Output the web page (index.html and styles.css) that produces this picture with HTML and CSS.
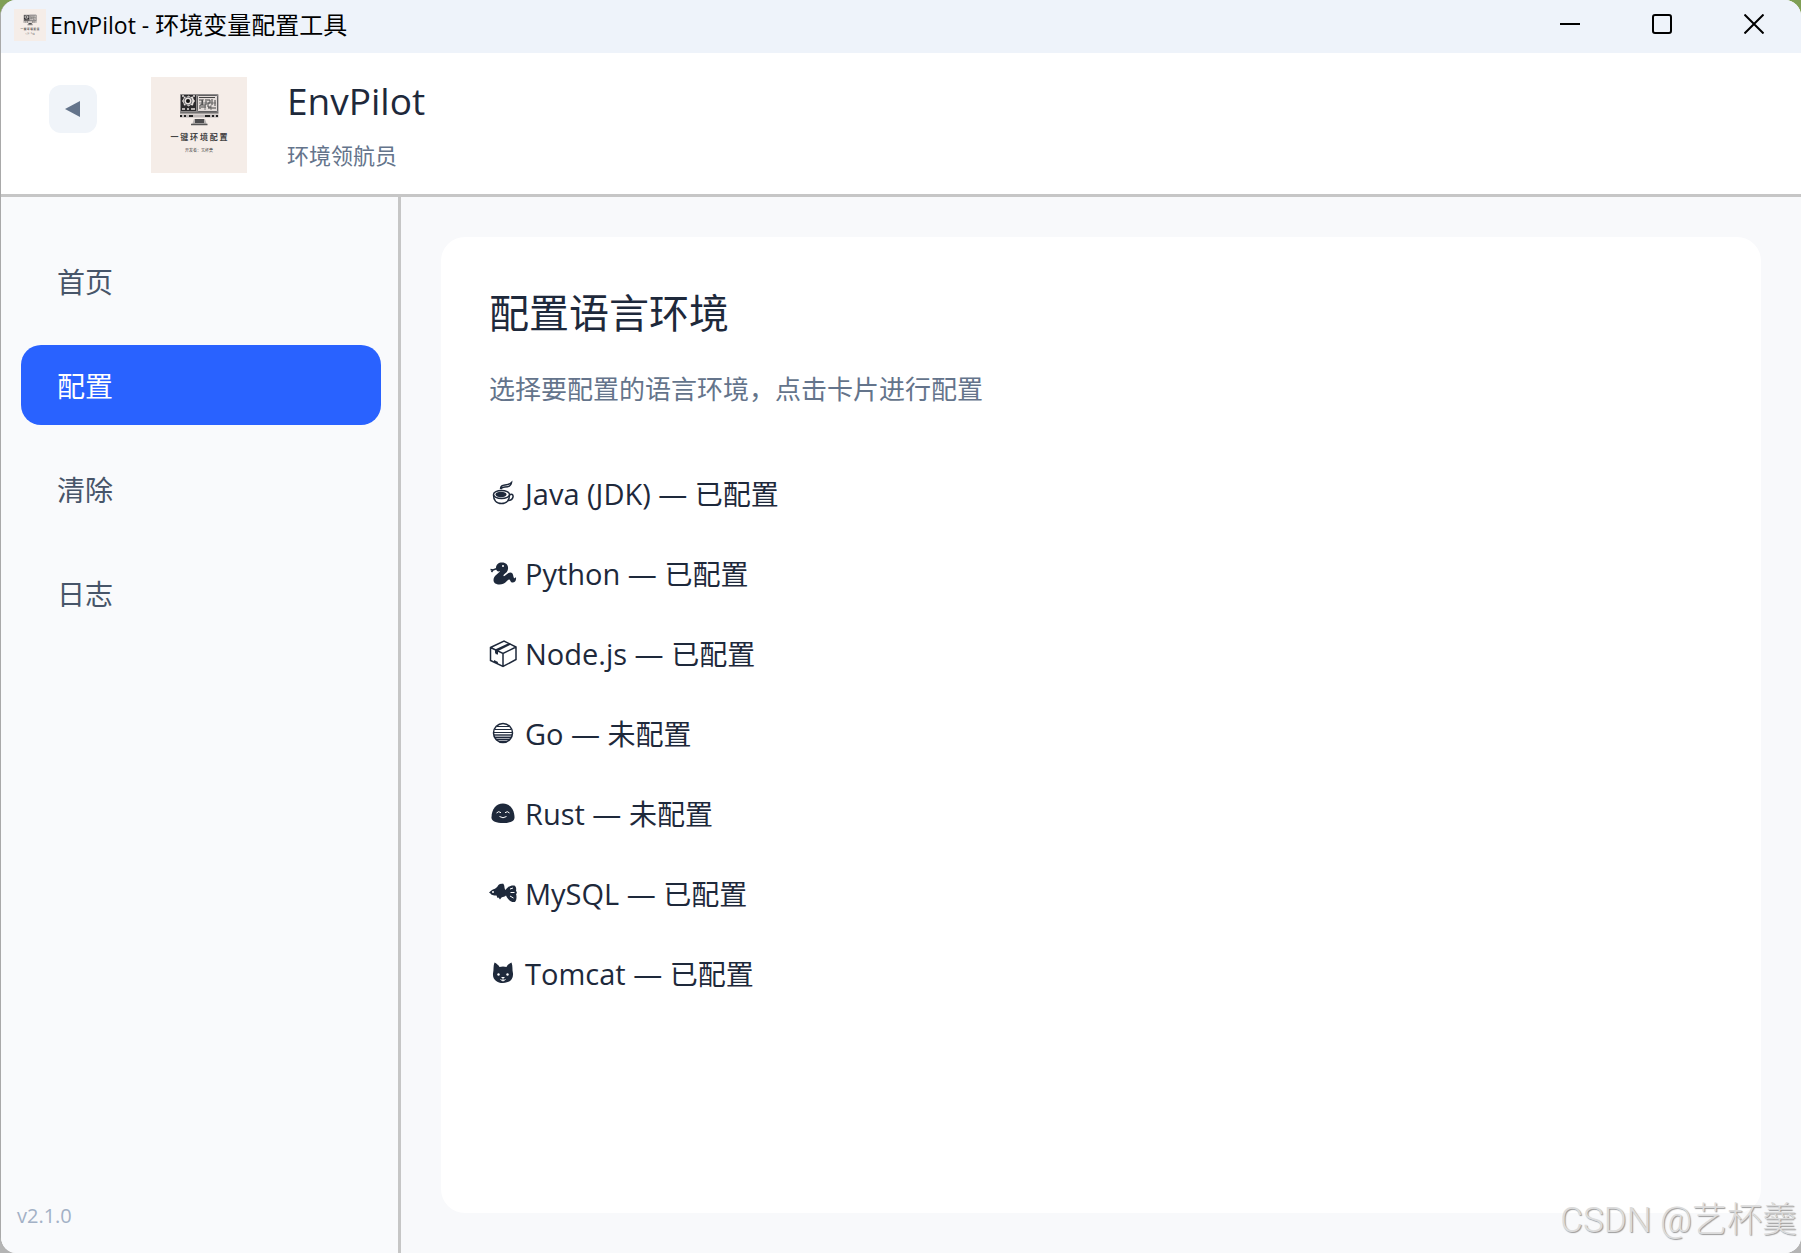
FILE: index.html
```html
<!DOCTYPE html>
<html lang="zh-CN">
<head>
    <meta charset="UTF-8">
    <title>EnvPilot - 环境变量配置工具</title>
    <link rel="stylesheet" href="styles.css">
</head>
<body>
<svg class="sprite" aria-hidden="true">
    <symbol id="logo" viewBox="0 0 96 96">
        <rect width="96" height="96" fill="#f5ede8"/>
        <!-- monitor -->
        <rect x="29" y="17" width="38.5" height="19" rx="1" fill="#8d8a8a"/>
        <rect x="30" y="18" width="15" height="16" fill="#2b2a2c"/>
        <path d="M37.5 18.5l2 1.5 2.5-.5.5 2.500 1.500 2-1.500 2-.5 2.500-2.500-.5-2 1.500-2-1.500-2.500.5-.5-2.500-1.500-2 1.500-2 .5-2.500 2.500.5z" fill="#e5dfdc"/>
        <circle cx="37" cy="24" r="4" fill="none" stroke="#77777a" stroke-width="1"/>
        <circle cx="37" cy="24" r="2" fill="#111"/>
        <path d="M31 32h3M36 32h2M40 32h4M31 19h2M42 19h2" stroke="#e5dfdc" stroke-width="1.500"/>
        <rect x="46.500" y="18.500" width="20" height="16" rx="1" fill="#e3dcd9" stroke="#4a4a4c" stroke-width=".8"/>
        <path d="M48 23h3v5h-2v4M52 22l-1 6h4v-6M56 23h3v3h-2v4h3M61 22v6M64 23v6M50 30h5M57 31h8M48 20.500h16" fill="none" stroke="#444" stroke-width="1"/>
        <path d="M48 26h17M54 28v5M60 28v5" stroke="#666" stroke-width=".8"/>
        <path d="M29 36h38.500" stroke="#555" stroke-width="1"/>
        <rect x="29" y="37.500" width="38.500" height="3" fill="#bdb7b6"/>
        <path d="M29 39h2M33 39h2M38 39h4M54 39h5M61 39h2M65 39h2" stroke="#222" stroke-width="2"/>
        <rect x="44" y="42" width="9" height="4" fill="#1e1e20"/>
        <path d="M43 42h11l2 6H41z" fill="#77777a" opacity=".5"/>
        <path d="M40 47.500h16.500" stroke="#555" stroke-width="1.300"/>
        <text class="logo-name" x="48" y="63" text-anchor="middle">一 键 环 境 配 置</text>
        <text class="logo-author" x="48" y="75" text-anchor="middle">开发者：艺杯羹</text>
    </symbol>
</svg>

<div class="window">
    <header class="titlebar">
        <svg class="titlebar-icon"><use href="#logo"/></svg>
        <p class="titlebar-text"><span class="titlebar-app">EnvPilot - </span>环境变量配置工具</p>
        <div class="controls">
            <button type="button" aria-label="最小化">
                <svg viewBox="0 0 20 20"><path d="M0 10h20"/></svg>
            </button>
            <button type="button" aria-label="最大化">
                <svg viewBox="0 0 20 20"><rect x="1" y="1" width="18" height="18" rx="2"/></svg>
            </button>
            <button type="button" aria-label="关闭">
                <svg viewBox="0 0 20 20"><path d="M.5.5l19 19M19.500.5l-19 19"/></svg>
            </button>
        </div>
    </header>

    <div class="header">
        <button type="button" class="back" aria-label="返回">
            <svg viewBox="0 0 16 18"><path d="M0 9l15-8v16z"/></svg>
        </button>
        <svg class="logo"><use href="#logo"/></svg>
        <div class="brand">
            <h1>EnvPilot</h1>
            <p>环境领航员</p>
        </div>
    </div>

    <div class="body">
        <aside class="sidebar">
            <nav class="nav">
                <a href="#home">首页</a>
                <a href="#config" class="active">配置</a>
                <a href="#clear">清除</a>
                <a href="#log">日志</a>
            </nav>
            <p class="version">v2.1.0</p>
        </aside>

        <main class="main">
            <section class="card">
                <h2>配置语言环境</h2>
                <p class="hint">选择要配置的语言环境，点击卡片进行配置</p>
                <ul class="langs">
                    <li><button type="button">
                        <svg class="icon" viewBox="0 0 28 28">
                            <path class="line" d="M4.500 15c0 4.500 2.500 8.500 8 8.500s8-4 8-8.500"/>
                            <ellipse class="line" cx="12.500" cy="14.500" rx="8" ry="4"/>
                            <ellipse cx="12" cy="14.500" rx="5.500" ry="2.700"/>
                            <path class="line" d="M20.500 15c2-1.500 4-.5 3.500 2s-2.500 3.500-5 3.500M11.500 9c0-6 6.500-2 11-6.500-.5 4-4 4.500-6.500 4.500-2 0-3 .5-4.500 2"/>
                        </svg>
                        <span class="label">Java (JDK) — <span class="status">已配置</span></span>
                    </button></li>
                    <li><button type="button">
                        <svg class="icon" viewBox="0 0 28 28">
                            <path d="M7 8c0-3.500 2.500-5.500 6-5.500 4.500 0 6.500 3 6 6.500-.3 2.500-2 4-4 5.500-1 1-.5 2 .5 1.500 2-1 3.500-3.500 6-3.500 3 0 2.500 4 3.500 5.500.6.800 1-1 2-.5.500 3-1.500 5.500-4 5-2-.5-1.500-3-3-3s-3.500 5-9.500 5c-3.500 0-6-1.500-6-4.500 0-4.500 5.500-6.500 6.500-9-2 1-4 0-4-3z"/>
                            <path class="line" d="M8 8.500l-4 1.500-2.500-.5M4 10l-1.500 2"/>
                            <circle class="hole" cx="14" cy="6" r="1"/>
                        </svg>
                        <span class="label">Python — <span class="status">已配置</span></span>
                    </button></li>
                    <li><button type="button">
                        <svg class="icon" viewBox="0 0 28 28">
                            <path class="line" d="M1.500 7.500L15 1l12 6v12.500L14 26.500l-12.500-6zM1.500 7.500L14 13.500 27 7M14 13.500v13"/>
                            <path d="M6 9.500L20 3l2.500 1.200L9 11v4l-1-1-1 .5-1-2zM5 20l4 2-.5 2L5 22z"/>
                        </svg>
                        <span class="label">Node.js — <span class="status">已配置</span></span>
                    </button></li>
                    <li><button type="button">
                        <svg class="icon" viewBox="0 0 28 28">
                            <circle class="line" cx="14" cy="13" r="9.500"/>
                            <path class="thin" d="M8 6.500h12M6 9.500h16M5 12.500h18M5 15h18M6 17.500h16M7 19.500h14M10 21.500h8"/>
                            <path class="shade" d="M4.500 14h19c0 5-4 8.500-9.500 8.500S4.500 19 4.500 14z"/>
                        </svg>
                        <span class="label">Go — <span class="status">未配置</span></span>
                    </button></li>
                    <li><button type="button">
                        <svg class="icon" viewBox="0 0 28 28">
                            <path d="M14 3.500c7 0 11.500 6 11.500 14 0 4-5 5.500-11.500 5.500S2.500 21.500 2.500 17.500c0-8 4.500-14 11.500-14z"/>
                            <path class="cut" d="M7.500 13q2-2.500 4.500-.3M16 12.700q2.500-2.200 4.500.3M10.500 16.500q3.500 2.500 7 0"/>
                        </svg>
                        <span class="label">Rust — <span class="status">未配置</span></span>
                    </button></li>
                    <li><button type="button">
                        <svg class="icon" viewBox="0 0 28 28">
                            <path d="M0 12.500l3-2.500c2-1 4-1.500 5.500-3.500C10 3.500 12.500 4 14 3.500c2 1.500 1 5 2.500 6.500 3-4 6-5 9-4.500 1.500 1 2 3 1.500 5l1 2.500-1 1c1 3 .5 6-1 8-4 .5-7-2-9-6.500-1 1-3 1.500-4.500 2l-1.500 2-1.500-2-1 .5-1-2.500c-3 0-5.500-.5-6-2z"/>
                            <circle class="hole" cx="4" cy="12" r="1"/>
                            <path class="cut" d="M21 9l3-1M21.500 12.500h4M21 16l3.500 2"/>
                        </svg>
                        <span class="label">MySQL — <span class="status">已配置</span></span>
                    </button></li>
                    <li><button type="button">
                        <svg class="icon" viewBox="0 0 28 28">
                            <path d="M5.500 2.500c2 1 4 2.500 5 4.500 2-.8 5-.8 7 0 1-2 3-3.500 5-4.500 1.500 3.500.5 7 1.500 11 .5 6-4 9.500-10 9.500S3.500 19.500 4 13.500c1-4 0-7.500 1.500-11z"/>
                            <circle class="hole" cx="9.500" cy="14.500" r="1.200"/>
                            <circle class="hole" cx="18.500" cy="14.500" r="1.200"/>
                            <path class="cut" d="M12.500 17.500h3M14 17v4M11.500 19.500l2.500 1.500 2.500-1.500"/>
                        </svg>
                        <span class="label">Tomcat — <span class="status">已配置</span></span>
                    </button></li>
                </ul>
            </section>
        </main>
    </div>
</div>
<p class="watermark">CSDN @艺杯羹</p>
</body>
</html>
```
FILE: styles.css
```css
* {
    box-sizing: border-box;
    margin: 0;
    padding: 0;
}

body {
    height: 100vh;
    position: relative;
    overflow: hidden;
    background: linear-gradient(#7f9f55 0, #7f9f55 24px, #b4b4b4 24px);
    font-family: "Open Sans", "Noto Sans CJK SC", sans-serif;
    color: #1e293b;
}

button {
    border: none;
    background: none;
    font: inherit;
    color: inherit;
    cursor: pointer;
}

.sprite {
    display: none;
}

.logo-name {
    font: 700 8px "Noto Sans CJK SC", sans-serif;
    fill: #444;
}

.logo-author {
    font: 4px "Noto Sans CJK SC", sans-serif;
    fill: #444;
}

.window {
    height: 100%;
    display: flex;
    flex-direction: column;
    border-left: 1px solid #a9a9a9;
    border-radius: 16px;
    overflow: hidden;
    background: #fff;
}

/* title bar */
.titlebar {
    height: 53px;
    flex: none;
    display: flex;
    align-items: center;
    padding: 0 1px 0 13px;
    background: #eef3fa;
}

.titlebar-icon {
    width: 32px;
    height: 32px;
    margin-bottom: 4px;
}

.titlebar-text {
    margin: 0 auto 4px 4px;
    font-size: 24px;
    line-height: 36px;
    color: #000;
    white-space: nowrap;
}

.titlebar-app {
    font-size: 23px;
    white-space: pre;
}

.controls {
    display: flex;
    align-self: stretch;
}

.controls button {
    width: 92px;
    padding-bottom: 5px;
    display: flex;
    align-items: center;
    justify-content: center;
}

.controls svg {
    width: 20px;
    height: 20px;
    fill: none;
    stroke: #000;
    stroke-width: 2;
}

/* header */
.header {
    flex: none;
    display: flex;
    align-items: flex-start;
    padding: 24px 48px 21px;
    border-bottom: 3px solid #c6c6c6;
}

.back {
    width: 48px;
    height: 48px;
    margin: 8px 54px 0 0;
    display: flex;
    align-items: center;
    justify-content: center;
    border-radius: 12px;
    background: #f0f4f9;
}

.back svg {
    width: 16px;
    height: 18px;
    fill: #64748b;
}

.logo {
    width: 96px;
    height: 96px;
    margin-right: 40px;
}

.brand h1 {
    font-size: 37px;
    font-weight: 400;
    line-height: 48px;
}

.brand p {
    margin-top: 14px;
    font-size: 22px;
    line-height: 32px;
    color: #64748b;
}

.body {
    flex: 1;
    display: flex;
    min-height: 0;
}

/* sidebar */
.sidebar {
    width: 400px;
    flex: none;
    display: flex;
    flex-direction: column;
    justify-content: space-between;
    padding: 44px 17px 23px 20px;
    border-right: 3px solid #c6c6c6;
    background: #f9fafc;
}

.nav {
    display: flex;
    flex-direction: column;
    gap: 24px;
}

.nav a {
    padding: 2px 36px 0;
    border-radius: 20px;
    font-size: 28px;
    line-height: 78px;
    color: #475569;
    text-decoration: none;
}

.nav a.active {
    background: #2962ff;
    color: #fff;
}

.version {
    margin-left: -4px;
    font-size: 20px;
    line-height: 28px;
    color: #a3b1c6;
}

/* content */
.main {
    flex: 1;
    display: flex;
    padding: 40px;
    background: #f8f9fb;
}

.card {
    flex: 1;
    padding: 48px;
    border-radius: 24px;
    background: #fff;
}

.card h2 {
    font-size: 40px;
    font-weight: 400;
    line-height: 56px;
}

.hint {
    margin: 28px 0 45px;
    font-size: 26px;
    line-height: 40px;
    color: #64748b;
}

.langs {
    list-style: none;
}

.langs button {
    width: 100%;
    height: 80px;
    display: flex;
    align-items: center;
    gap: 8px;
    text-align: left;
}

.label {
    font-size: 29px;
    line-height: 40px;
}

.status {
    font-size: 28px;
}

.icon {
    width: 28px;
    height: 28px;
    fill: #1e293b;
}

.icon .line {
    fill: none;
    stroke: #1e293b;
    stroke-width: 1.5;
}

.icon .thin {
    stroke: #1e293b;
    stroke-width: 1;
}

.icon .shade {
    opacity: .4;
}

.icon .hole {
    fill: #fff;
}

.icon .cut {
    fill: none;
    stroke: #fff;
    stroke-width: 1;
}

.watermark {
    position: absolute;
    right: 4px;
    bottom: 6px;
    font: 300 35px/52px Roboto, "Noto Sans CJK SC", sans-serif;
    color: #dcdcdc;
    text-shadow: 1px 1px 1px #999;
}
```
